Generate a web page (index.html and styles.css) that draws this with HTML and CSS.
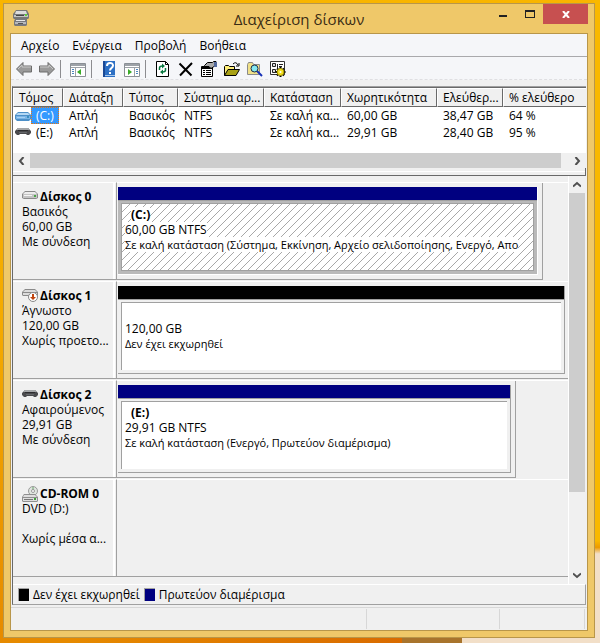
FILE: index.html
```html
<!DOCTYPE html>
<html lang="el">
<head>
    <meta charset="UTF-8">
    <meta name="viewport" content="width=device-width, initial-scale=1.0">
    <title>Διαχείριση δίσκων</title>
    <link rel="stylesheet" href="styles.css">
</head>
<body>
    <!-- Shared icons -->
    <svg class="defs" width="0" height="0" aria-hidden="true">
        <symbol id="drive" viewBox="0 0 16 16">
            <path d="M3 2h10l3 3v4l-2 1H2L0 9V5z" fill="#8a8a8a"/>
            <path d="M3 3h10l2 2H1z" fill="#ececec"/>
            <path d="M1 5h14v4H1z" fill="#c4c4c4"/>
            <path d="M2 6h8v1H2z" fill="#f4f4f4"/>
            <path d="M12 6h2v2h-2z" fill="#4aa546"/>
        </symbol>
        <symbol id="drive-selected" viewBox="0 0 16 16">
            <path d="M3 4h10l3 3v4l-2 2H2l-2-2V7z" fill="#4c8fc8"/>
            <path d="M3 5h10l2 2H1z" fill="#b4d8f4"/>
            <path d="M1 8h14v3H1z" fill="#79b4e6"/>
            <path d="M2 9h8v1H2z" fill="#a6d0f2"/>
            <path d="M12 8h2v2h-2z" fill="#3a8fc0"/>
        </symbol>
        <symbol id="removable" viewBox="0 0 16 16">
            <path d="M3 3h10l3 3v2l-2 2h-2l-1-1H5l-1 1H2L0 8V6z" fill="#4a4a4d"/>
            <path d="M3 3h10l2 2H1z" fill="#a4a6a8"/>
            <path d="M3 5h10v1H3z" fill="#2c2c2e"/>
            <path d="M4 7h8v1H4z" fill="#66686b"/>
        </symbol>
    </svg>

    <div class="window">
        <!-- Title bar -->
        <div class="titlebar">
            <svg class="icon" viewBox="0 0 16 16">
                <path d="M3 0h11l2 4v4l-1 1H1L0 8V4z" fill="#777"/>
                <path d="M3 1h10l1 3H2z" fill="#dcdcdc"/>
                <path d="M1 5h14v2H1z" fill="#c4c4c4"/>
                <path d="M3 5h8v1H3z" fill="#444"/>
                <path d="M12 4h2v2h-2z" fill="#5bd13c"/>
                <path d="M2 9h12v6l-1 1H2l-1-1v-4z" fill="#77797f"/>
                <path d="M3 10h9v1H3z" fill="#e8e8e8"/>
                <path d="M2 12h11v2H2z" fill="#b5b8bd"/>
                <path d="M5 13h5v1H5z" fill="#555"/>
            </svg>
            <h1>Διαχείριση δίσκων</h1>
            <div class="controls">
                <button class="minimize" aria-label="Ελαχιστοποίηση"><svg width="8" height="2"><path d="M0 0h8v2H0z" fill="#222"/></svg></button>
                <button class="maximize" aria-label="Μεγιστοποίηση"><svg width="10" height="8"><path d="M0 0h10v8H0zM1 2v5h8V2z" fill="#222" fill-rule="evenodd"/></svg></button>
                <button class="close" aria-label="Κλείσιμο"><svg width="8" height="7" viewBox="0 0 8 7"><path d="M1 0l6 7M7 0L1 7" stroke="#fff" stroke-width="2"/></svg></button>
            </div>
        </div>

        <div class="client">
            <nav class="menu">
                <button>Αρχείο</button>
                <button>Ενέργεια</button>
                <button>Προβολή</button>
                <button>Βοήθεια</button>
            </nav>

            <!-- Toolbar -->
            <div class="toolbar">
                <button aria-label="Πίσω"><svg class="icon" viewBox="0 0 16 16"><path d="M.5 8L7 1.500V5h8.500v6H7v3.500z" fill="#9a9a9a" stroke="#6c6c6c"/><path d="M2 8l4-4v2h9" fill="none" stroke="#c8c8c8"/></svg></button>
                <button aria-label="Εμπρός"><svg class="icon" viewBox="0 0 16 16"><path d="M15.500 8L9 1.500V5H.5v6H9v3.500z" fill="#9a9a9a" stroke="#6c6c6c"/><path d="M14 8l-4-4v2H1" fill="none" stroke="#c8c8c8"/></svg></button>
                <span class="separator"></span>
                <button aria-label="Δέντρο κονσόλας"><svg class="icon" viewBox="0 0 16 16">
                    <path d="M.5 2.500h15v13H.5z" fill="#fff" stroke="#8b9096"/><path d="M1 3h14v2H1z" fill="#9da2a8"/><path d="M1 6h14v1H1zM5 7h1v8H5z" fill="#9da2a8"/>
                    <path d="M2 8h2v1H2zm0 2h2v1H2zm0 2h2v1H2z" fill="#4c86c0"/><path d="M11 8v6l-4-3z" fill="#3aab28"/></svg></button>
                <span class="separator"></span>
                <button aria-label="Βοήθεια"><svg class="icon" viewBox="0 0 16 16">
                    <path d="M2 0h12v16H2z" fill="#2c6fc4"/><path d="M2 0h2v16H2z" fill="#1b4894"/><path d="M4 14h10v1H4z" fill="#a8c8ec"/>
                    <path d="M6 5c0-4 6-4 6-.5C12 7 9 7 9 9.500" fill="none" stroke="#fff" stroke-width="2"/><path d="M8 11h2v2H8z" fill="#fff"/></svg></button>
                <button aria-label="Παράθυρο ενεργειών"><svg class="icon" viewBox="0 0 16 16">
                    <path d="M.5 2.500h15v13H.5z" fill="#fff" stroke="#8b9096"/><path d="M1 3h14v2H1z" fill="#9da2a8"/><path d="M1 6h14v1H1zM10 7h1v8h-1z" fill="#9da2a8"/>
                    <path d="M12 8h2v1h-2zm0 2h2v1h-2zm0 2h2v1h-2z" fill="#4c86c0"/><path d="M4 8v6l4-3z" fill="#3aab28"/></svg></button>
                <span class="separator"></span>
                <button aria-label="Ανανέωση"><svg class="icon" viewBox="0 0 16 16">
                    <path d="M1.500.5h9l3 3v12h-12z" fill="#fff" stroke="#000"/><path d="M10.500.5v3h3" fill="none" stroke="#000"/>
                    <path d="M4.500 9V7q0-2 3-2M10.500 7v2q0 2-3 2" fill="none" stroke="#087840" stroke-width="1.500"/><path d="M7 2.500v5L10 5zM8 8.500v5L5 11z" fill="#087840"/></svg></button>
                <button aria-label="Διαγραφή"><svg class="icon" viewBox="0 0 16 16"><path d="M1.500 2.500l12 12M14 2L2 14.500" stroke="#000" stroke-width="2"/></svg></button>
                <button aria-label="Ιδιότητες"><svg class="icon" viewBox="0 0 16 16">
                    <path d="M.5 5.500h11v10H.5z" fill="#fff" stroke="#000"/><path d="M1 6h10v2H1z"/><path d="M2 9h2v1H2zm3 0h5v1H5zM2 11h2v1H2zm3 0h5v1H5zM2 13h2v1H2zm3 0h5v1H5z" fill="#000"/>
                    <path d="M3.500 4.500l3-3h5l1-1H15v5h-2l-3 2-2-2h-4z" fill="#a9a9a9" stroke="#000"/><path d="M13 1h3v5h-3z" fill="#53699c"/></svg></button>
                <button aria-label="Άνοιγμα"><svg class="icon" viewBox="0 0 16 16">
                    <path d="M.5 14.500v-9l1-1h3l1 1h5v3" fill="#ffef79" stroke="#000"/><path d="M.5 14.500l3.500-6h11.500l-3.500 6z" fill="#a8a115" stroke="#000"/>
                    <path d="M9 3q3-3 5 1m1-2v3h-3" fill="none" stroke="#000"/></svg></button>
                <button aria-label="Εύρεση"><svg class="icon" viewBox="0 0 16 16">
                    <path d="M.5 13.500v-10l1-2h4l1 2h6v10z" fill="#f0e088" stroke="#8a8a8a"/><path d="M10 10l5 5" stroke="#1630b8" stroke-width="2"/>
                    <circle cx="7.500" cy="7.500" r="3.500" fill="#84e8f2" stroke="#1f2c45"/></svg></button>
                <button aria-label="Ρυθμίσεις"><svg class="icon" viewBox="0 0 16 16">
                    <path d="M.5.5h14v13H.5z" fill="#fff" stroke="#333"/><path d="M2.500 2.500h3v3h-3zm0 6h3v3h-3z" fill="#ddd" stroke="#222"/>
                    <path d="M7 3h1v4H7zm2 0h4v1H9zm0 2h3v1H9z" fill="#222"/><path d="M10.500 6v10M5.500 11h10M7 7.500l7 7m0-7l-7 7" stroke="#000" stroke-width="2"/>
                    <circle cx="10.500" cy="11" r="3.500" fill="#f1df21" stroke="#a18e00"/><circle cx="10.500" cy="11" r="1" fill="#fff"/></svg></button>
            </div>

            <div class="panes">
                <!-- Volume list -->
                <div class="volumes">
                    <table>
                        <colgroup>
                            <col class="col-volume"><col class="col-layout"><col class="col-type"><col class="col-fs">
                            <col class="col-status"><col class="col-capacity"><col class="col-free"><col>
                        </colgroup>
                        <thead>
                            <tr><th>Τόμος</th><th>Διάταξη</th><th>Τύπος</th><th>Σύστημα αρ...</th><th>Κατάσταση</th><th>Χωρητικότητα</th><th>Ελεύθερ...</th><th>% ελεύθερο</th></tr>
                        </thead>
                        <tbody>
                            <tr>
                                <td class="volume"><div><svg class="icon"><use href="#drive-selected"/></svg><span class="selected">(C:)</span></div></td>
                                <td>Απλή</td><td>Βασικός</td><td>NTFS</td><td>Σε καλή κα...</td><td>60,00 GB</td><td>38,47 GB</td><td>64 %</td>
                            </tr>
                            <tr>
                                <td class="volume"><div><svg class="icon"><use href="#removable"/></svg><span>(E:)</span></div></td>
                                <td>Απλή</td><td>Βασικός</td><td>NTFS</td><td>Σε καλή κα...</td><td>29,91 GB</td><td>28,40 GB</td><td>95 %</td>
                            </tr>
                        </tbody>
                    </table>
                    <div class="hscroll">
                        <button aria-label="Αριστερά"><svg width="7" height="8" viewBox="0 0 7 8"><path d="M5.500 0L2 4l3.500 4" fill="none" stroke="#505050" stroke-width="2"/></svg></button>
                        <div class="thumb"></div>
                        <button aria-label="Δεξιά"><svg width="7" height="8" viewBox="0 0 7 8"><path d="M1.500 0L5 4 1.500 8" fill="none" stroke="#505050" stroke-width="2"/></svg></button>
                    </div>
                </div>
                <div class="splitter"></div>

                <!-- Disk map -->
                <div class="map">
                    <div class="disks">
                        <section class="disk">
                            <div class="label">
                                <h2><svg class="icon"><use href="#drive"/></svg>Δίσκος 0</h2>
                                <p>Βασικός</p>
                                <p>60,00 GB</p>
                                <p>Με σύνδεση</p>
                            </div>
                            <div class="track">
                                <div class="group" style="width: 94.4%">
                                    <div class="partition active">
                                        <div class="strip"></div>
                                        <div class="info">
                                            <p class="letter"><span>(C:)</span></p>
                                            <p><span>60,00 GB NTFS</span></p>
                                            <p class="state"><span>Σε καλή κατάσταση (Σύστημα, Εκκίνηση, Αρχείο σελιδοποίησης, Ενεργό, Απο</span></p>
                                        </div>
                                    </div>
                                </div>
                            </div>
                        </section>
                        <section class="disk">
                            <div class="label">
                                <h2><svg class="icon" viewBox="0 0 16 16">
                                    <path d="M3 1h10l3 3v4H1L0 7V4z" fill="#8a8a8a"/><path d="M3 2h10l2 2H1zM1 5h14v2H1z" fill="#dcdcdc"/>
                                    <circle cx="11" cy="9" r="4.500" fill="#fff" stroke="#888"/><path d="M10 6h2v3h2l-3 3-3-3h2z" fill="#c0440e"/></svg>Δίσκος 1</h2>
                                <p>Άγνωστο</p>
                                <p>120,00 GB</p>
                                <p>Χωρίς προετο...</p>
                            </div>
                            <div class="track">
                                <div class="group" style="width: 100.4%">
                                    <div class="partition unallocated">
                                        <div class="strip"></div>
                                        <div class="info">
                                            <p class="letter"></p>
                                            <p>120,00 GB</p>
                                            <p class="state">Δεν έχει εκχωρηθεί</p>
                                        </div>
                                    </div>
                                </div>
                            </div>
                        </section>
                        <section class="disk">
                            <div class="label">
                                <h2><svg class="icon"><use href="#removable"/></svg>Δίσκος 2</h2>
                                <p>Αφαιρούμενος</p>
                                <p>29,91 GB</p>
                                <p>Με σύνδεση</p>
                            </div>
                            <div class="track">
                                <div class="group" style="width: 88.5%">
                                    <div class="partition">
                                        <div class="strip"></div>
                                        <div class="info">
                                            <p class="letter">(E:)</p>
                                            <p>29,91 GB NTFS</p>
                                            <p class="state">Σε καλή κατάσταση (Ενεργό, Πρωτεύον διαμέρισμα)</p>
                                        </div>
                                    </div>
                                </div>
                            </div>
                        </section>
                        <section class="disk">
                            <div class="label">
                                <h2><svg class="icon" viewBox="0 0 16 16">
                                    <circle cx="11" cy="5" r="4.500" fill="#dfe5df" stroke="#9a9a9a"/><path d="M11 1v3" stroke="#6aa86a"/><circle cx="11" cy="5" r="1.500" fill="#fff" stroke="#999"/>
                                    <path d="M2 8h11l3 3v4l-1 1H1l-1-1v-4z" fill="#8f8f8f"/><path d="M2 9h11l2 2H1zM1 12h14v3H1z" fill="#dedede"/>
                                    <path d="M2 13h9v1H2z" fill="#777"/><path d="M12 12h2v2h-2z" fill="#3fa03c"/></svg>CD-ROM 0</h2>
                                <p>DVD (D:)</p>
                                <p></p>
                                <p>Χωρίς μέσα α...</p>
                            </div>
                            <div class="track empty"></div>
                        </section>
                    </div>
                    <div class="vscroll">
                        <button aria-label="Επάνω"><svg width="8" height="7" viewBox="0 0 8 7"><path d="M0 5.500L4 2l4 3.500" fill="none" stroke="#505050" stroke-width="2"/></svg></button>
                        <div class="thumb"></div>
                        <button aria-label="Κάτω"><svg width="8" height="7" viewBox="0 0 8 7"><path d="M0 1.500L4 5l4-3.500" fill="none" stroke="#505050" stroke-width="2"/></svg></button>
                    </div>
                </div>

                <div class="legend">
                    <span class="swatch black"></span>Δεν έχει εκχωρηθεί
                    <span class="swatch navy"></span>Πρωτεύον διαμέρισμα
                </div>
            </div>

            <div class="status">
                <span></span>
                <span class="middle"></span>
                <span class="last"></span>
            </div>
        </div>
    </div>
</body>
</html>
```

FILE: styles.css
```css
* {
    box-sizing: border-box;
}

/* Desktop behind the window */
body {
    margin: 0;
    padding: 3px 5px 6px 3px;
    min-height: 100vh;
    font-family: "Open Sans", "Noto Sans", sans-serif;
    font-size: 12px;
    line-height: 15px;
    color: #000;
    background:
        linear-gradient(to right, #e68a00 0 12%, #d96b00 67%, #a8742c 67% 77%, #f2dfc8 77%) bottom / 100% 7px no-repeat,
        linear-gradient(to bottom, #f9b800 0 84%, #ec9a00 85%, #f2dfc8 86%) right / 6px 100% no-repeat,
        linear-gradient(to bottom, #f9b500, #f5aa00 50%, #e68a00);
}

h1, h2, p {
    margin: 0;
    font-size: 12px;
}

button {
    display: flex;
    align-items: center;
    justify-content: center;
    padding: 0;
    border: none;
    background: none;
    font: inherit;
    color: inherit;
}

.defs {
    position: absolute;
}

.icon {
    width: 16px;
    height: 16px;
    flex: none;
}

.window {
    padding: 0 6px 6px;
    border: 1px solid #b8964a;
    background: #efc869;
}

/* Title bar */
.titlebar {
    display: grid;
    grid-template-columns: 100px 1fr 100px;
    height: 29px;
}

.titlebar .icon {
    margin: 6px 3px;
}

.titlebar h1 {
    font-size: 15px;
    font-weight: 400;
    line-height: 30px;
    text-align: center;
    color: #3a2c14;
}

.controls {
    display: flex;
    justify-content: flex-end;
}

.controls button {
    flex: none;
    width: 27px;
    height: 20px;
}

.controls .minimize {
    padding-top: 4px;
}

.controls .close {
    width: 45px;
    background: #c75050;
}

.client {
    border: 1px solid #b8964a;
    background: #f0f0f0;
}

/* Menu and toolbar */
.menu {
    display: flex;
    gap: 13px;
    height: 23px;
    padding-left: 10px;
    border-bottom: 1px solid #a9a9ac;
    background: #f5f6f9;
}

.toolbar {
    display: flex;
    align-items: center;
    height: 23px;
    padding: 1px 0 0 1px;
    border-bottom: 1px dashed #dfdfe2;
    background: #f5f6f9;
}

.toolbar button {
    width: 23px;
    height: 20px;
}

.separator {
    width: 1px;
    height: 18px;
    margin: 0 5px 0 2px;
    background: #8c8c90;
}

.panes {
    margin: 6px 1px 2px;
    border-top: 1px solid #a0a0a0;
    border-left: 1px solid #696969;
    border-bottom: 1px solid #a0a0a0;
}

/* Volume list */
.volumes {
    border-top: 1px solid #696969;
    background: #fff;
}

table {
    width: 100%;
    table-layout: fixed;
    border-collapse: separate;
    border-spacing: 0;
}

.col-volume { width: 50px; }
.col-layout { width: 60px; }
.col-type { width: 55px; }
.col-fs { width: 86px; }
.col-status { width: 77px; }
.col-capacity { width: 96px; }
.col-free { width: 66px; }

th, td {
    padding: 0 0 0 6px;
    overflow: hidden;
    font-weight: 400;
    text-align: left;
    white-space: nowrap;
}

th {
    height: 19px;
    padding-left: 5px;
    border-top: 1px solid #fff;
    border-left: 1px solid #fff;
    border-right: 1px solid #696969;
    border-bottom: 1px solid #696969;
    background: #f0f0f0;
}

th:last-child {
    border-right: none;
}

td {
    height: 17px;
}

.volume {
    padding-left: 2px;
}

.volume div {
    display: flex;
    align-items: center;
}

.volume span {
    padding: 1px 5px;
}

.volume .selected {
    outline: 1px dotted #e07818;
    outline-offset: -1px;
    background: #3399ff;
    color: #fff;
}

/* Scroll bars */
.hscroll {
    display: flex;
    height: 15px;
    margin-top: 12px;
    background: #f0f0f0;
}

.hscroll button {
    width: 17px;
}

.hscroll .thumb {
    flex: 1;
    margin-right: 8px;
    background: #cdcdcd;
}

.vscroll {
    display: flex;
    flex-direction: column;
    width: 17px;
    border-left: 1px solid #fff;
}

.vscroll button {
    height: 17px;
}

.vscroll .thumb {
    height: 299px;
    background: #cdcdcd;
}

.vscroll button:last-child {
    margin-top: auto;
}

.splitter {
    height: 8px;
    border-right: 1px solid #696969;
    border-bottom: 1px solid #696969;
    background: linear-gradient(#f0f0f0 0 3px, #fff 3px 4px, #f0f0f0 4px);
}

/* Disk map */
.map {
    display: flex;
    padding-right: 1px;
}

.disks {
    flex: 1;
    min-width: 0;
    padding: 6px 0;
}

.disk {
    display: grid;
    grid-template-columns: 104px minmax(0, 1fr);
    min-height: 98px;
    margin-bottom: 1px;
}

.label {
    padding: 6px 0 0 9px;
    border-top: 1px solid #fff;
    border-right: 1px solid #a0a0a0;
    border-bottom: 1px solid #a0a0a0;
    box-shadow: inset -1px 0 #f0f0f0, inset -3px 0 #fff;
    white-space: nowrap;
}

.label h2 {
    display: flex;
    gap: 2px;
    height: 15px;
}

.label p, .info p {
    height: 15px;
}

.track {
    overflow: hidden;
    border-top: 1px solid #fff;
}

.track.empty {
    border-bottom: 1px solid #a0a0a0;
}

.group {
    padding: 4px 4px 4px 1px;
    border-right: 1px solid #a0a0a0;
    border-bottom: 1px solid #a0a0a0;
}

.partition {
    border-right: 1px solid #a0a0a0;
    border-bottom: 1px solid #a0a0a0;
}

.strip {
    height: 14px;
    border-bottom: 1px solid #a0a0a0;
    background: #000080;
}

.unallocated .strip {
    background: #000;
}

.info {
    height: 68px;
    margin: 2px 3px 3px;
    padding: 3px 3px 0;
    overflow: hidden;
    border-top: 1px solid #a0a0a0;
    border-left: 1px solid #a0a0a0;
    background: #fff;
    white-space: nowrap;
}

.letter {
    padding-left: 6px;
    font-weight: 700;
}

.state {
    font-size: 11px;
}

.active {
    border-color: #fff;
    background: #b9b9b9;
}

.active .info {
    border: 1px solid #a0a0a0;
    background: linear-gradient(135deg, #fff 46%, #a8a8a8 46% 54%, #fff 54%) 0 0 / 8px 8px;
}

.active span {
    display: inline-block;
    background: #fff;
}

/* Legend and status bar */
.legend {
    display: flex;
    align-items: center;
    gap: 4px;
    height: 20px;
    padding-left: 5px;
    border-top: 1px solid #fff;
    border-right: 1px solid #a0a0a0;
}

.swatch {
    width: 11px;
    height: 13px;
    border-top: 1px solid #a0a0a0;
    border-left: 1px solid #a0a0a0;
}

.black { background: #000; }
.navy { background: #000080; }

.status {
    display: flex;
    height: 23px;
    padding: 1px 2px 1px 0;
    border-top: 1px solid #d7d7d7;
}

.status span {
    flex: 1;
    border-right: 1px solid #d7d7d7;
}

.status .middle {
    flex: none;
    width: 133px;
}

.status .last {
    flex: none;
    width: 85px;
}
```
